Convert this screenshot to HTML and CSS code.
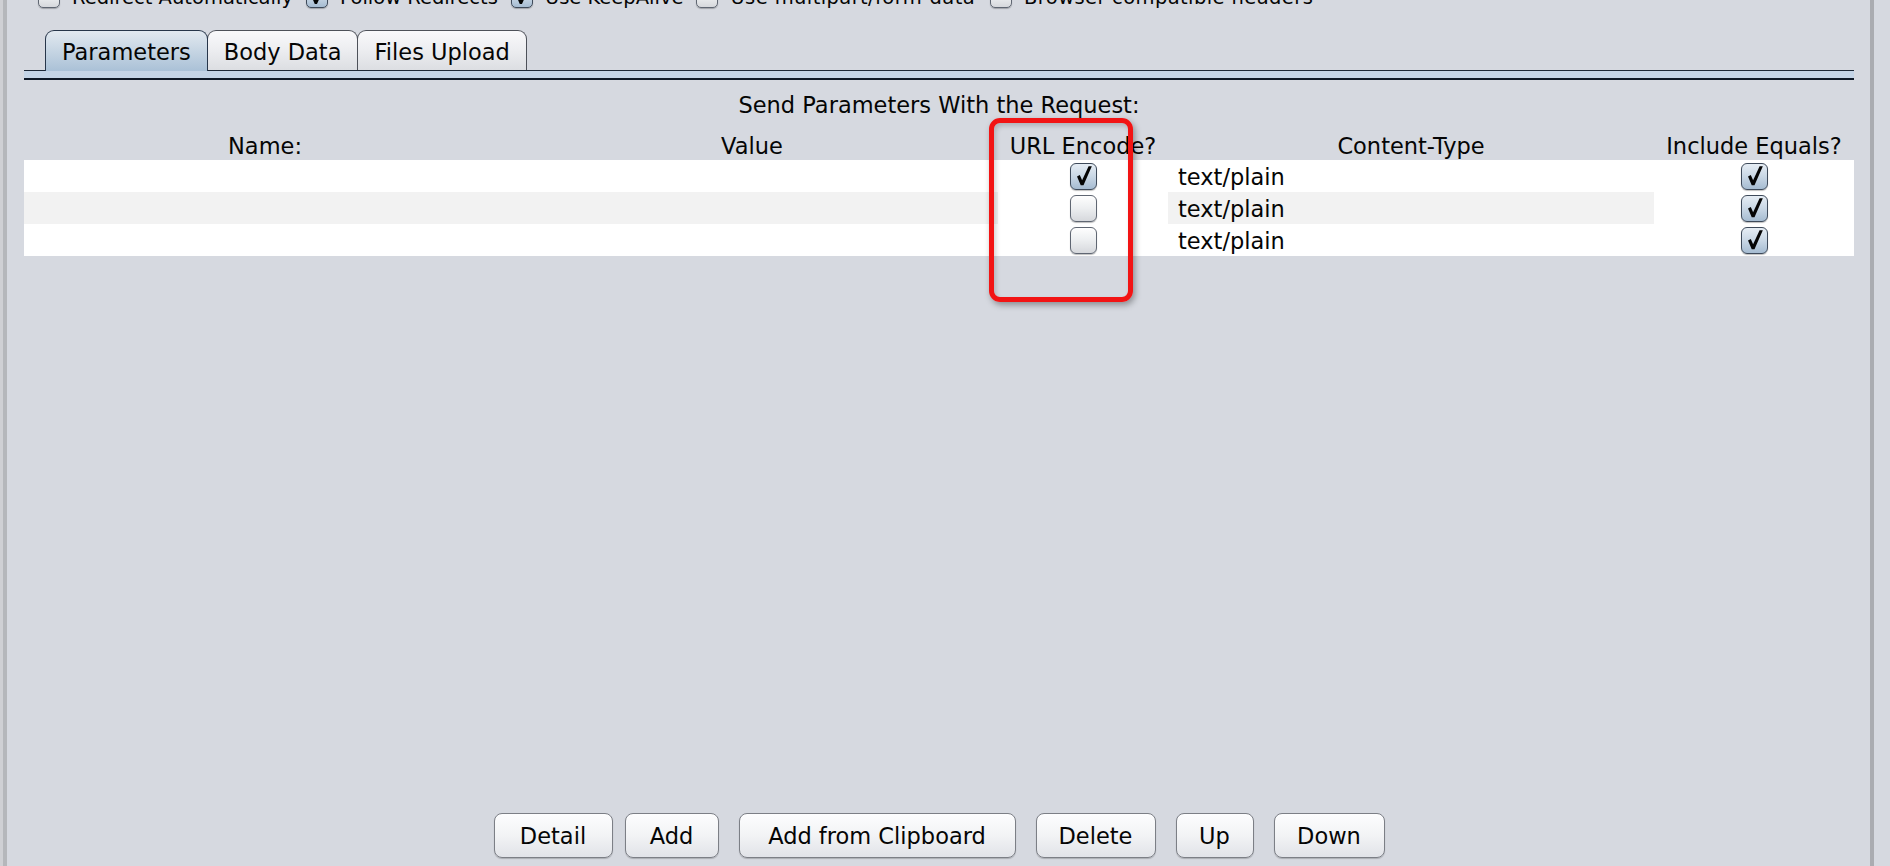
FILE: index.html
```html
<!DOCTYPE html>
<html>
<head>
<meta charset="utf-8">
<link rel="stylesheet" href="styles.css">
</head>
<body>
<div class="window">
  <div class="edge-left"></div>
  <div class="panel">
    <div class="options">
      <label class="opt"><span class="cb cb-sm"></span>Redirect Automatically</label>
      <label class="opt"><span class="cb cb-sm checked"><svg viewBox="0 0 27 27"><path d="M6.5 13.5 L9.5 12 L12 17.5 L19 2.5 L22.5 2.5 L13.5 23 L10.5 23 Z"/></svg></span>Follow Redirects</label>
      <label class="opt"><span class="cb cb-sm checked"><svg viewBox="0 0 27 27"><path d="M6.5 13.5 L9.5 12 L12 17.5 L19 2.5 L22.5 2.5 L13.5 23 L10.5 23 Z"/></svg></span>Use KeepAlive</label>
      <label class="opt opt-wide"><span class="cb cb-sm"></span>Use multipart/form-data</label>
      <label class="opt opt-wide"><span class="cb cb-sm"></span>Browser-compatible headers</label>
    </div>

    <div class="tabbar">
      <div class="tab selected">Parameters</div>
      <div class="tab">Body Data</div>
      <div class="tab">Files Upload</div>
    </div>
    <div class="band"></div>

    <div class="params">
      <div class="title">Send Parameters With the Request:</div>
      <div class="grid head">
        <div class="hcell">Name:</div>
        <div class="hcell">Value</div>
        <div class="hcell">URL Encode?</div>
        <div class="hcell">Content-Type</div>
        <div class="hcell">Include Equals?</div>
      </div>
      <div class="grid row">
        <div class="cell stripe"></div>
        <div class="cell stripe"></div>
        <div class="cell check"><span class="cb checked"><svg viewBox="0 0 27 27"><path d="M6.5 13.5 L9.5 12 L12 17.5 L19 2.5 L22.5 2.5 L13.5 23 L10.5 23 Z"/></svg></span></div>
        <div class="cell stripe ctype">text/plain</div>
        <div class="cell check"><span class="cb checked"><svg viewBox="0 0 27 27"><path d="M6.5 13.5 L9.5 12 L12 17.5 L19 2.5 L22.5 2.5 L13.5 23 L10.5 23 Z"/></svg></span></div>
      </div>
      <div class="grid row alt">
        <div class="cell stripe"></div>
        <div class="cell stripe"></div>
        <div class="cell check"><span class="cb"></span></div>
        <div class="cell stripe ctype">text/plain</div>
        <div class="cell check"><span class="cb checked"><svg viewBox="0 0 27 27"><path d="M6.5 13.5 L9.5 12 L12 17.5 L19 2.5 L22.5 2.5 L13.5 23 L10.5 23 Z"/></svg></span></div>
      </div>
      <div class="grid row">
        <div class="cell stripe"></div>
        <div class="cell stripe"></div>
        <div class="cell check"><span class="cb"></span></div>
        <div class="cell stripe ctype">text/plain</div>
        <div class="cell check"><span class="cb checked"><svg viewBox="0 0 27 27"><path d="M6.5 13.5 L9.5 12 L12 17.5 L19 2.5 L22.5 2.5 L13.5 23 L10.5 23 Z"/></svg></span></div>
      </div>
    </div>

    <div class="buttons">
      <button class="btn w-detail">Detail</button>
      <button class="btn w-add">Add</button>
      <button class="btn w-clip">Add from Clipboard</button>
      <button class="btn w-delete">Delete</button>
      <button class="btn w-up">Up</button>
      <button class="btn w-down">Down</button>
    </div>
  </div>
  <div class="edge-right"></div>
</div>
<div class="highlight"></div>
</body>
</html>
```

FILE: styles.css
```css
html, body {
  margin: 0;
  padding: 0;
}
body {
  position: relative;
  height: 866px;
  overflow: hidden;
  background: #d6d9e0;
  font-family: "DejaVu Sans", "Liberation Sans", sans-serif;
  color: #050505;
}
.window {
  display: flex;
  height: 866px;
}
.edge-left {
  width: 8px;
  flex: none;
  background: linear-gradient(to right, #cfd0d4 0 3px, #b5b7bb 3px 7px, #d6d9e0 7px);
}
.edge-right {
  width: 20px;
  flex: none;
  background: linear-gradient(to right, #aaacb1 0 4px, #d6d9e0 4px);
}
.panel {
  flex: 1;
  min-width: 0;
  display: flex;
  flex-direction: column;
  padding: 0 16px;
}

/* top option row (cut off by the window edge) */
.options {
  display: flex;
  align-items: center;
  height: 26px;
  margin-top: -16px;
  padding-left: 14px;
  font-size: 19.5px;
  white-space: nowrap;
}
.opt {
  display: flex;
  align-items: center;
  margin-right: 13px;
}
.opt-wide {
  letter-spacing: 0.4px;
  margin-right: 15px;
}

/* checkboxes */
.cb {
  display: inline-block;
  box-sizing: border-box;
  width: 27px;
  height: 27px;
  border: 1.5px solid #5f6672;
  border-radius: 6px;
  background: linear-gradient(#fefefe, #eceef0 50%, #d6d8dc);
  box-shadow: 0 1px 1px rgba(0, 0, 0, 0.25);
}
.cb.checked {
  border-color: #3e4a5a;
  background: linear-gradient(#e6edf4, #c9d7e5 50%, #a6bcd2);
}
.cb svg {
  display: block;
  width: 100%;
  height: 100%;
  fill: #050505;
}
.cb-sm {
  width: 22px;
  height: 22px;
  border-radius: 5px;
  margin-right: 12px;
}

/* tabs */
.tabbar {
  display: flex;
  height: 40px;
  margin-top: 20px;
  padding-left: 21px;
  border-bottom: 1px solid #1c2735;
}
.tab {
  box-sizing: border-box;
  height: 40px;
  padding: 3px 16px 0;
  margin-right: -1px;
  border: 1px solid #4d5159;
  border-bottom: none;
  border-radius: 9px 9px 0 0;
  background: linear-gradient(#f9f9fb, #ecedf0 50%, #dcdee2);
  font-size: 22.5px;
  line-height: 36px;
  white-space: nowrap;
}
.tab.selected {
  position: relative;
  z-index: 1;
  height: 41px;
  margin-bottom: -1px;
  border-color: #27364a;
  background: linear-gradient(#e2e9f0, #c6d5e3 50%, #aac1d7);
}
.band {
  height: 7px;
  background: #c4d4e6;
  border-bottom: 2px solid #0e1826;
}

/* parameters table */
.title {
  margin-top: 10px;
  text-align: center;
  font-size: 22.5px;
  line-height: 30px;
}
.grid {
  display: grid;
  grid-template-columns: 482px 492px 170px 486px 200px;
  font-size: 22.5px;
}
.head {
  height: 30px;
  margin-top: 10px;
}
.hcell {
  padding-top: 2px;
  line-height: 28px;
  text-align: center;
  white-space: nowrap;
}
.row {
  height: 32px;
  background: #ffffff;
}
.cell {
  box-sizing: border-box;
  height: 32px;
  padding-top: 3px;
  line-height: 29px;
}
.row.alt .stripe {
  background: #f2f2f2;
}
.check {
  display: flex;
  align-items: center;
  justify-content: center;
  padding-top: 0;
}
.ctype {
  padding-left: 10px;
}

/* buttons */
.buttons {
  display: flex;
  justify-content: center;
  gap: 20px;
  margin-top: auto;
  margin-bottom: 8px;
}
.btn {
  box-sizing: border-box;
  height: 45px;
  padding: 0;
  border: 1.5px solid #7c7f86;
  border-radius: 8px;
  background: linear-gradient(#fdfdfe, #f2f3f5 50%, #e1e3e8);
  box-shadow: 0 1px 1px rgba(0, 0, 0, 0.2);
  font-family: "DejaVu Sans", "Liberation Sans", sans-serif;
  font-size: 22.5px;
  color: #050505;
  display: flex;
  align-items: center;
  justify-content: center;
}
.w-detail { width: 119px; }
.w-add { width: 94px; margin-left: -8px; }
.w-clip { width: 277px; }
.w-delete { width: 120px; }
.w-up { width: 78px; }
.w-down { width: 111px; }

/* red annotation box */
.highlight {
  position: absolute;
  left: 989px;
  top: 118px;
  width: 144px;
  height: 184px;
  box-sizing: border-box;
  border: 5px solid #f21414;
  border-radius: 11px;
  box-shadow: 2px 3px 6px rgba(0, 0, 0, 0.35), inset 2px 3px 5px rgba(0, 0, 0, 0.18);
}
```
